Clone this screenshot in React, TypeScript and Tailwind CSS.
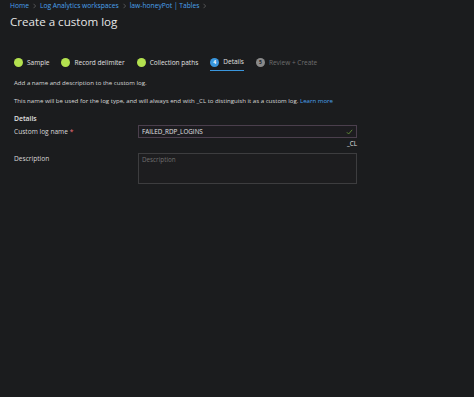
import { FC } from 'react';

const steps = [
  { label: 'Sample', state: 'done' },
  { label: 'Record delimiter', state: 'done' },
  { label: 'Collection paths', state: 'done' },
  { label: 'Details', state: 'active' },
  { label: 'Review + Create', state: 'todo' },
];

const StepDot: FC<{ state: string; n: number }> = ({ state, n }) => {
  if (state === 'done') return <span className="w-[9px] h-[9px] rounded-full bg-[#b3e14f] shrink-0" />;
  if (state === 'active')
    return (
      <span className="w-[9px] h-[9px] rounded-full bg-[#3a96dd] shrink-0 flex items-center justify-center text-[5px] leading-none text-white font-bold">
        {n}
      </span>
    );
  return (
    <span className="w-[9px] h-[9px] rounded-full bg-[#8a8a8a] shrink-0 flex items-center justify-center text-[5px] leading-none text-[#1b1c1e] font-bold">
      {n}
    </span>
  );
};

const Chevron = () => (
  <svg width="5" height="6" viewBox="0 0 5 6" className="mx-[3px]">
    <path d="M1.5 0.8 L3.6 3 L1.5 5.2" stroke="#6b6b6b" strokeWidth="0.7" fill="none" />
  </svg>
);

export default function App() {
  return (
    <div className="w-[474px] h-[397px] bg-[#1b1c1e] text-[#d8d8d8] font-['Open_Sans',sans-serif] overflow-hidden">
      {/* Breadcrumb */}
      <div className="flex items-center pl-[10px] pt-[1px] h-[11px] text-[6.7px] text-[#4aa0ec]">
        <span>Home</span>
        <Chevron />
        <span>Log Analytics workspaces</span>
        <Chevron />
        <span>law-honeyPot | Tables</span>
        <Chevron />
      </div>
      <h1 className="pl-[10px] mt-[3px] text-[11.6px] leading-[16px] text-[#e6e6e6]">Create a custom log</h1>

      {/* Steps */}
      <div className="flex items-start pl-[14px] mt-[27px] text-[6.5px]">
        {steps.map((s, i) => (
          <div
            key={s.label}
            className={`flex items-center gap-[4px] mr-[12px] pb-[3px] h-[14px] ${
              s.state === 'active' ? 'border-b border-[#3a96dd]' : ''
            }`}
          >
            <StepDot state={s.state} n={i + 1} />
            <span className={s.state === 'todo' ? 'text-[#6e6e6e]' : 'text-[#e0e0e0]'}>{s.label}</span>
          </div>
        ))}
      </div>

      {/* Body */}
      <div className="pl-[14px] text-[6.1px] leading-[10px]">
        <p className="mt-[7px]">Add a name and description to the custom log.</p>
        <p className="mt-[8px]">
          This name will be used for the log type, and will always end with _CL to distinguish it as a custom log.{' '}
          <span className="text-[#4aa0ec]">Learn more</span>
        </p>
        <div className="mt-[8px] text-[6.8px] font-semibold text-[#e0e0e0]">Details</div>

        <div className="flex items-start mt-[1px]">
          <div className="w-[124px] pt-[2px] text-[6.6px]">
            Custom log name <span className="text-[#f1707b]">*</span>
          </div>
          <div className="w-[219px] flex flex-col items-end">
            <div className="w-full h-[13px] border border-[#4b3f4d] bg-[#1d1c20] flex items-center justify-between px-[3px] text-[6.3px] text-[#e0e0e0]">
              <span>FAILED_RDP_LOGINS</span>
              <svg width="7" height="6" viewBox="0 0 7 6">
                <path d="M0.8 3.2 L2.6 5 L6.2 0.8" stroke="#6d9e3a" strokeWidth="0.8" fill="none" />
              </svg>
            </div>
            <span className="text-[6.3px] leading-[10px] mt-[1px] text-[#e0e0e0]">_CL</span>
          </div>
        </div>

        <div className="flex items-start mt-[4px]">
          <div className="w-[124px] pt-[1px] text-[6.6px]">Description</div>
          <div className="w-[219px] h-[31px] border border-[#3d3d3f] bg-[#1d1d1f] px-[3px] pt-[1px] text-[6.3px] text-[#6e6e6e]">
            Description
          </div>
        </div>
      </div>
    </div>
  );
}
